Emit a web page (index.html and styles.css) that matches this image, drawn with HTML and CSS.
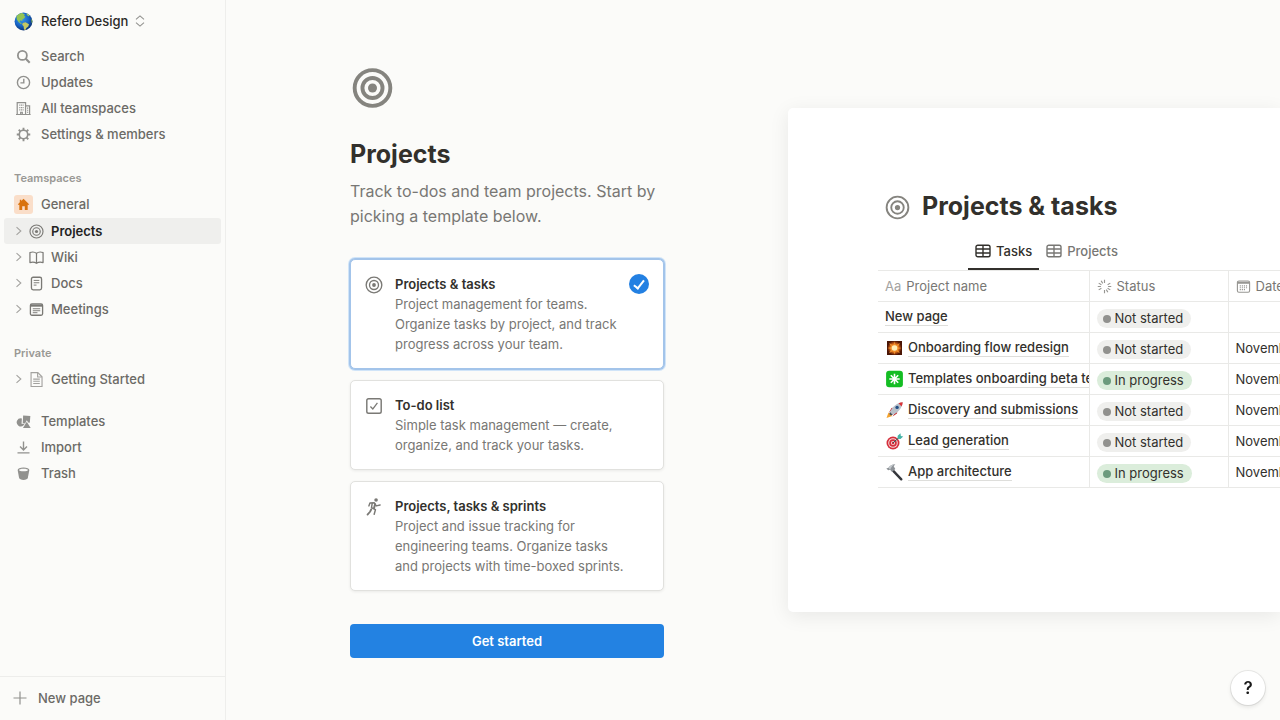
FILE: index.html
```html
<!DOCTYPE html>
<html lang="en">
<head>
  <meta charset="UTF-8" />
  <meta name="viewport" content="width=device-width, initial-scale=1" />
  <title>Projects</title>
  <link rel="stylesheet" href="styles.css">
</head>
<body>
  <!-- Shared icons -->
  <svg class="sprite" aria-hidden="true">
    <symbol id="i-target" viewBox="0 0 20 20">
      <g fill="none" stroke="currentColor" stroke-width="1.5">
        <circle cx="10" cy="10" r="8.7" />
        <circle cx="10" cy="10" r="5" />
      </g>
      <circle cx="10" cy="10" r="2.1" fill="currentColor" />
    </symbol>
    <symbol id="i-target-bold" viewBox="0 0 20 20">
      <g fill="none" stroke="currentColor" stroke-width="1.9">
        <circle cx="10" cy="10" r="8.7" />
        <circle cx="10" cy="10" r="4.9" />
      </g>
      <circle cx="10" cy="10" r="2.2" fill="currentColor" />
    </symbol>
    <symbol id="i-chevron" viewBox="0 0 10 10">
      <path d="M2.8.6 7.600 5 2.800 9.400" fill="none" stroke="currentColor" stroke-width="1.2" />
    </symbol>
    <symbol id="i-table" viewBox="0 0 16 14">
      <g fill="none" stroke="currentColor" stroke-width="1.4">
        <rect x="1" y="1.2" width="14" height="11.6" rx="1.8" />
        <path d="M1 5h14M1 9h14M8 1.2v11.6" />
      </g>
    </symbol>
  </svg>

  <aside class="sidebar">
    <button class="switcher" type="button">
      <svg class="globe" viewBox="0 0 20 20">
        <defs>
          <radialGradient id="sea" cx="40%" cy="35%" r="65%">
            <stop offset="0" stop-color="#3f9bea" />
            <stop offset="0.6" stop-color="#1766c8" />
            <stop offset="1" stop-color="#0c3478" />
          </radialGradient>
          <clipPath id="globe-clip"><circle cx="10" cy="10" r="9.4" /></clipPath>
        </defs>
        <circle cx="10" cy="10" r="9.4" fill="url(#sea)" />
        <g clip-path="url(#globe-clip)">
          <path d="M2.5 4.5C4 2.200 6.500 1 9 1.200l2.500 1.300-1 1.500 1.500 1-1.500 1.800-1.500.7-.5 2-1.500-.8-1.200 1 .8 1.300 1.700 1.200-1 .3-2.500-2L3 8z" fill="#93c455" />
          <path d="M9.200 11.500l3-.7 3.600 2-.8 2.500-2 1.500-1 2.200-1.500-.6-.4-3.300-1.500-1.800z" fill="#c5c763" />
          <path d="M13 1.300l2.500 1 1 2-1.500.2-1.500-1.500z" fill="#9fca65" />
          <path d="M18 7.500l2 1v4l-1.500-1.500z" fill="#77a84c" />
        </g>
      </svg>
      <span>Refero Design</span>
      <svg class="updown" viewBox="0 0 10 12">
        <path d="M1 4.300 5 .9l4 3.400M1 7.700l4 3.400 4-3.400" fill="none" stroke="currentColor" stroke-width="1.1" />
      </svg>
    </button>

    <nav class="menu">
      <a class="item" href="#">
        <svg class="icon" viewBox="0 0 16 16"><g fill="none" stroke="currentColor" stroke-width="1.900"><circle cx="6.800" cy="6.800" r="4.800" /><path d="M10.200 10.200 14.600 14.600" stroke-width="2.200" /></g></svg>
        <span>Search</span>
      </a>
      <a class="item" href="#">
        <svg class="icon" viewBox="0 0 16 16"><g fill="none" stroke="currentColor" stroke-width="1.500"><circle cx="8" cy="8" r="6.500" /><path d="M8.300 4v4.400H4.700" /></g></svg>
        <span>Updates</span>
      </a>
      <a class="item" href="#">
        <svg class="icon" viewBox="0 0 16 16"><g fill="none" stroke="currentColor" stroke-width="1.300"><path d="M1.300 14.500V1.800h8.900v12.700M0 14.400h15.600M10.200 5.200h4.300v9.200M5 14v-2h1.700v2" /><path d="M3.500 4.500h4.600M3.500 7h4.600M3.500 9.500h4.600" stroke-dasharray="1.100 .65" /><path d="M12.400 7v6" stroke-dasharray="1.200 1" /></g></svg>
        <span>All teamspaces</span>
      </a>
      <a class="item" href="#">
        <svg class="icon" viewBox="0 0 16 16"><circle cx="8" cy="8" r="4.500" fill="none" stroke="currentColor" stroke-width="1.700" /><path d="M8 .8v2.800M8 12.400v2.800M.8 8h2.800M12.400 8h2.800M2.900 2.900l2 2M11.100 11.100l2 2M13.100 2.900l-2 2M4.900 11.100l-2 2" stroke="currentColor" stroke-width="2" /></svg>
        <span>Settings &amp; members</span>
      </a>
    </nav>

    <section class="group">
      <h2 class="group-title">Teamspaces</h2>
      <a class="item team" href="#">
        <span class="team-icon">
          <svg viewBox="0 0 14 14"><path d="M7 .8 13 6.600v.8h-1.500V13H8.400V9H5.600v4H2.500V7.400H1v-.8l2-2V2h1.600v1.200z" fill="#d9730d" /></svg>
        </span>
        <span>General</span>
      </a>
      <a class="item page active" href="#">
        <svg class="chevron"><use href="#i-chevron" /></svg>
        <svg class="icon"><use href="#i-target" /></svg>
        <span>Projects</span>
      </a>
      <a class="item page" href="#">
        <svg class="chevron"><use href="#i-chevron" /></svg>
        <svg class="icon" viewBox="0 0 16 16"><path d="M8 3.600C6.200 2 3.600 1.800 1 2.700v10.700c2.600-.8 5.200-.6 7 .9 1.800-1.500 4.400-1.700 7-.9V2.700C12.400 1.800 9.800 2 8 3.600zv10.500" fill="none" stroke="currentColor" stroke-width="1.300" stroke-linejoin="round" /></svg>
        <span>Wiki</span>
      </a>
      <a class="item page" href="#">
        <svg class="chevron"><use href="#i-chevron" /></svg>
        <svg class="icon" viewBox="0 0 16 16"><g fill="none" stroke="currentColor"><rect x="2.600" y="1.300" width="10.800" height="13.400" rx="1.800" stroke-width="1.400" /><path d="M5 4.700h6M5 7.200h6M5 9.700h3" /></g></svg>
        <span>Docs</span>
      </a>
      <a class="item page" href="#">
        <svg class="chevron"><use href="#i-chevron" /></svg>
        <svg class="icon" viewBox="0 0 16 16"><g fill="none" stroke="currentColor"><rect x="1.500" y="2.100" width="13" height="12" rx="1.600" stroke-width="1.400" /><path d="M1.500 4h13" stroke-width="2" /><path d="M4 7.200h8M4 9.300h8M4 11.400h5" /></g></svg>
        <span>Meetings</span>
      </a>
    </section>

    <section class="group">
      <h2 class="group-title">Private</h2>
      <a class="item page" href="#">
        <svg class="chevron"><use href="#i-chevron" /></svg>
        <svg class="icon light" viewBox="0 0 16 16"><g fill="none" stroke="currentColor" stroke-width="1.200"><path d="M2.200.6h7.200l4.500 4.500v10.300H2.200z" /><path d="M9.200.8v4.500h4.500M4.500 7.600h7M4.500 9.900h7M4.500 12.200h7" /></g></svg>
        <span>Getting Started</span>
      </a>
    </section>

    <nav class="menu tools">
      <a class="item" href="#">
        <svg class="icon" viewBox="0 0 16 16"><g fill="currentColor"><path d="M7.600 1.700l7.700.5-.6 7-1.700-.1-1.500-2.400L9.700 10l-2.500-.2z" /><path d="M6.300 4.800A4.300 4.300 0 1 0 8.100 12l1-1.400-3.200-.3z" /><path d="M11.500 8.300l4.200 6.500H7.400z" /></g></svg>
        <span>Templates</span>
      </a>
      <a class="item" href="#">
        <svg class="icon" viewBox="0 0 16 16"><path d="M8 1.500v9M4.300 7 8 10.600 11.700 7M1.600 13.700h12.800" fill="none" stroke="currentColor" stroke-width="1.500" /></svg>
        <span>Import</span>
      </a>
      <a class="item" href="#">
        <svg class="icon" viewBox="0 0 16 16"><path fill-rule="evenodd" fill="currentColor" d="M8 1.500c3.700 0 6.200 1 6.200 2.800 0 .6-1.200 6.500-1.500 8.200-.3 1.500-2.200 2.300-4.700 2.300s-4.400-.8-4.700-2.300c-.3-1.700-1.500-7.600-1.500-8.200C1.800 2.500 4.300 1.500 8 1.500zm0 1.300c-2.800 0-4.800.6-4.800 1.400S5.200 5.700 8 5.700s4.800-.7 4.800-1.500S10.800 2.800 8 2.800z" /></svg>
        <span>Trash</span>
      </a>
    </nav>

    <button class="new-page" type="button">
      <svg viewBox="0 0 14 14"><path d="M7 .5v13M.5 7h13" stroke="currentColor" stroke-width="1.200" /></svg>
      <span>New page</span>
    </button>
  </aside>

  <main class="main">
    <form class="picker">
      <svg class="hero-icon"><use href="#i-target-bold" /></svg>
      <h1>Projects</h1>
      <p class="intro">Track to-dos and team projects. Start by picking a template below.</p>

      <div class="cards">
        <label class="card">
          <svg class="card-icon"><use href="#i-target" /></svg>
          <span class="card-text">
            <strong>Projects &amp; tasks</strong>
            <span>Project management for teams. Organize tasks by project, and track progress across your team.</span>
          </span>
          <input type="radio" name="template" checked />
        </label>
        <label class="card">
          <svg class="card-icon" viewBox="0 0 20 20"><g fill="none" stroke="currentColor"><rect x="2" y="2" width="16" height="16" rx="2" stroke-width="1.600" /><path d="M6 10.500 8.700 13.300 13.800 6.500" stroke-width="1.400" /></g></svg>
          <span class="card-text">
            <strong>To-do list</strong>
            <span>Simple task management — create, organize, and track your tasks.</span>
          </span>
          <input type="radio" name="template" />
        </label>
        <label class="card">
          <svg class="card-icon" viewBox="0 0 20 20"><circle cx="12.300" cy="2.300" r="2" fill="currentColor" /><g fill="none" stroke="currentColor" stroke-width="1.600" stroke-linecap="round" stroke-linejoin="round"><path d="M4.300 8.800 5.500 5.500 10.200 5.300 12.500 8.800 16.800 7.800" /><path d="M8 6 7.200 10.800 11.600 13 10.200 18" /><path d="M11.200 6.800 10 11.500" stroke-width="2.200" /><path d="M7 12.500 5.600 15.300 2.800 18.500" stroke-width="2" /></g></svg>
          <span class="card-text">
            <strong>Projects, tasks &amp; sprints</strong>
            <span>Project and issue tracking for engineering teams. Organize tasks and projects with time-boxed sprints.</span>
          </span>
          <input type="radio" name="template" />
        </label>
      </div>

      <button class="primary" type="button">Get started</button>
    </form>

    <section class="preview">
      <header class="preview-title">
        <svg><use href="#i-target" /></svg>
        <h2>Projects &amp; tasks</h2>
      </header>
      <div class="tabs">
        <button class="tab current" type="button"><svg><use href="#i-table" /></svg>Tasks</button>
        <button class="tab" type="button"><svg><use href="#i-table" /></svg>Projects</button>
      </div>
      <table>
        <colgroup>
          <col class="col-name" />
          <col class="col-status" />
          <col class="col-date" />
        </colgroup>
        <thead>
          <tr>
            <th><span class="th"><span class="aa">Aa</span>Project name</span></th>
            <th><span class="th"><svg viewBox="0 0 16 16"><path d="M8 .8v3.400M8 11.800v3.400M.8 8h3.400M11.800 8h3.400M4.400 1.800l1.700 2.900M9.900 11.300l1.700 2.900M14.200 4.400l-2.900 1.700M4.700 9.900l-2.900 1.700M1.800 4.400l2.900 1.700M11.300 9.900l2.900 1.700" stroke="currentColor" stroke-width="1.200" /></svg>Status</span></th>
            <th><span class="th"><svg viewBox="0 0 16 16"><g fill="none" stroke="currentColor"><rect x="1.500" y="2.100" width="13" height="12" rx="1.600" stroke-width="1.200" /><path d="M1.500 4h13" stroke-width="2.200" /><path d="M4 7.300h8M4 9.300h8M4 11.300h6" stroke-width="1.200" stroke-dasharray="1.200 1" /></g></svg>Date</span></th>
          </tr>
        </thead>
        <tbody>
          <tr>
            <td><span class="name"><a href="#">New page</a></span></td>
            <td><span class="status">Not started</span></td>
            <td></td>
          </tr>
          <tr>
            <td><span class="name">
              <svg viewBox="0 0 18 18">
                <defs><radialGradient id="spark"><stop offset="0" stop-color="#fffbe0" /><stop offset="0.250" stop-color="#ffd873" /><stop offset="0.550" stop-color="#e8751c" /><stop offset="1" stop-color="#561705" /></radialGradient></defs>
                <rect x="1.500" y="2" width="15" height="14" fill="#4a1606" />
                <circle cx="9" cy="9" r="7" fill="url(#spark)" />
                <path d="M9 2.500l1.100 4 4.400-2.500-2.500 4.200 4 .9-4 1.200 2.400 4-4.200-2.500L9 15.500l-1.300-3.800-4.200 2.600L6 10.200l-4-1.100 4-1L3.600 4l4.300 2.500z" fill="#f0912c" />
                <circle cx="9" cy="9" r="2.800" fill="#ffefb8" />
              </svg>
              <a href="#">Onboarding flow redesign</a></span></td>
            <td><span class="status">Not started</span></td>
            <td>November</td>
          </tr>
          <tr>
            <td><span class="name">
              <svg viewBox="0 0 18 18">
                <rect x=".6" y=".8" width="16.800" height="16.500" rx="3" fill="#14bd23" />
                <path d="M9 3.800v10.400M3.800 9h10.400M5.300 5.300l7.400 7.400M12.700 5.300l-7.400 7.400" stroke="#fff" stroke-width="1.600" />
              </svg>
              <a href="#">Templates onboarding beta test</a></span></td>
            <td><span class="status progress">In progress</span></td>
            <td>November</td>
          </tr>
          <tr>
            <td><span class="name">
              <svg viewBox="0 0 18 18">
                <path d="M3.500 11.500 6 7l4-.5zM7 15.500l4.500-3 .5-4z" fill="#c52b30" />
                <path d="M1 17l2-5.500L6.800 15z" fill="#f5a22c" />
                <path d="M4.500 11C7 5.500 11 2 17.200 1.200 16.500 7 13 11.500 7.300 13.700z" fill="#b9c1ca" />
                <path d="M13 2.300c1.300-.6 2.700-1 4.200-1.100-.1 1.500-.5 3-1.100 4.300z" fill="#da3237" />
                <path d="M4.500 11l2.800 2.700-2 .8-1.500-1.500z" fill="#454b55" />
                <circle cx="11.600" cy="6.400" r="1.700" fill="#234f85" />
              </svg>
              <a href="#">Discovery and submissions</a></span></td>
            <td><span class="status">Not started</span></td>
            <td>November</td>
          </tr>
          <tr>
            <td><span class="name">
              <svg viewBox="0 0 18 18">
                <circle cx="7.500" cy="11" r="6.500" fill="#d52f3c" />
                <circle cx="7.500" cy="11" r="4.800" fill="#f6dcdc" />
                <circle cx="7.500" cy="11" r="3.800" fill="#d52f3c" />
                <circle cx="7.500" cy="11" r="2.100" fill="#f6dcdc" />
                <circle cx="7.500" cy="11" r="1.200" fill="#d52f3c" />
                <path d="M7.500 11l6-5.500" stroke="#27595d" stroke-width="1" />
                <path d="M12 6.800l.2-3L15 1.300l.3 2.600 2.400.6L15 7z" fill="#44b3a6" />
              </svg>
              <a href="#">Lead generation</a></span></td>
            <td><span class="status">Not started</span></td>
            <td>November</td>
          </tr>
          <tr>
            <td><span class="name">
              <svg viewBox="0 0 18 18">
                <path d="M6.800 6.800 15.800 16.300" stroke="#35373c" stroke-width="2.400" stroke-linecap="round" />
                <path d="M.8 5.600 3 4.800C4.500 2.500 6.500 1.300 9.800 1.200L8.200 3.300l1.600 2.600-3.200 3-2-2.200-1.900.6z" fill="#8d9297" />
                <path d="M3 4.800C4.500 2.500 6.500 1.300 9.800 1.200 7.500 2 6 3.500 4.600 6.700z" fill="#c3c8cc" />
              </svg>
              <a href="#">App architecture</a></span></td>
            <td><span class="status progress">In progress</span></td>
            <td>November</td>
          </tr>
        </tbody>
      </table>
    </section>
  </main>

  <button class="help" type="button">?</button>
</body>
</html>
```
FILE: styles.css
```css
* {
  box-sizing: border-box;
}

body {
  margin: 0;
  display: flex;
  min-height: 100vh;
  overflow: hidden;
  font-family: Inter, "Liberation Sans", sans-serif;
  font-size: 13px;
  line-height: 20px;
  color: #32302c;
  background: #fbfbf9;
}

h1, h2, p {
  margin: 0;
}

a {
  color: inherit;
  text-decoration: none;
}

button {
  font: inherit;
  color: inherit;
  background: none;
  border: none;
  padding: 0;
  cursor: pointer;
}

svg {
  display: block;
  flex-shrink: 0;
}

.sprite {
  position: absolute;
  width: 0;
  height: 0;
}

/* Sidebar */
.sidebar {
  display: flex;
  flex-direction: column;
  width: 226px;
  flex-shrink: 0;
  border-right: 1px solid #eeeeec;
  font-weight: 500;
  color: #6b6a66;
}

.switcher {
  display: flex;
  align-items: center;
  height: 42px;
  margin-bottom: 1px;
  padding: 0 14px;
  color: #2b2a27;
}

.globe {
  width: 19px;
  height: 19px;
  margin-right: 8px;
}

.updown {
  width: 10px;
  height: 12px;
  margin-left: 7px;
  color: #91918e;
}

.item {
  display: flex;
  align-items: center;
  height: 26px;
  margin: 0 4px;
  padding: 0 12px;
  border-radius: 3px;
}

.item:hover {
  background: #f0f0ee;
}

.icon {
  width: 15px;
  height: 15px;
  margin-right: 10px;
  color: #91918e;
}

.page {
  padding-left: 10px;
}

.page .icon {
  margin: 0 7px 0 6px;
  color: #7a7975;
}

.page .light {
  color: #a3a29f;
}

.chevron {
  width: 9px;
  height: 10px;
  color: #a3a29f;
}

.active {
  background: #efefed;
  color: #23221f;
  font-weight: 600;
}

.group {
  margin-top: 19px;
}

.group-title {
  padding: 0 14px;
  font-size: 11px;
  font-weight: 600;
  line-height: 25px;
  color: #999894;
}

.team {
  margin-bottom: 1px;
  padding-left: 10px;
}

.team-icon {
  display: flex;
  align-items: center;
  justify-content: center;
  width: 19px;
  height: 19px;
  margin-right: 8px;
  border-radius: 3px;
  background: #fadec9;
}

.team-icon svg {
  width: 13px;
  height: 13px;
}

.tools {
  margin-top: 16px;
}

.new-page {
  display: flex;
  align-items: center;
  gap: 11px;
  height: 44px;
  margin-top: auto;
  padding: 0 13px 2px;
  border-top: 1px solid #ededeb;
}

.new-page svg {
  width: 14px;
  height: 14px;
  color: #91918e;
}

/* Template picker */
.main {
  display: flex;
  align-items: center;
  gap: 124px;
  flex: 1;
  min-width: 0;
  padding-left: 124px;
}

.picker {
  width: 314px;
  flex-shrink: 0;
}

.hero-icon {
  width: 41px;
  height: 52px;
  margin: 0 2px 24px;
  color: #85847f;
}

h1 {
  font-size: 25px;
  line-height: 32px;
}

.intro {
  margin: 9px 0 30px;
  font-size: 16px;
  line-height: 25px;
  color: #787774;
}

.cards {
  display: grid;
  gap: 11px;
}

.card {
  display: flex;
  align-items: flex-start;
  padding: 14px;
  border: 1px solid #e1e1de;
  border-radius: 5px;
  background: #fff;
  box-shadow: 0 1px 3px rgba(15, 15, 15, 0.07);
  cursor: pointer;
}

.card:has(input:checked) {
  border-color: #a3c4ea;
  box-shadow: 0 0 0 1px #a3c4ea, 0 0 0 2px #d0e4f8;
}

.card-icon {
  width: 18px;
  height: 18px;
  margin: 2px 12px 0 0;
  color: #7a7975;
}

.card-text {
  flex: 1;
  color: #787774;
}

.card strong {
  display: block;
  font-weight: 600;
  color: #32302c;
}

.card input {
  appearance: none;
  display: flex;
  align-items: center;
  justify-content: center;
  width: 20px;
  height: 20px;
  margin: 0 0 0 5px;
  border-radius: 50%;
}

.card input:checked {
  background: #2380e2;
}

.card input:checked::after {
  content: "";
  box-sizing: border-box;
  width: 6px;
  height: 11px;
  margin-bottom: 2px;
  border: solid #fff;
  border-width: 0 2px 2px 0;
  transform: rotate(38deg);
}

.primary {
  display: block;
  width: 100%;
  height: 34px;
  margin-top: 33px;
  border-radius: 4px;
  background: #2382e2;
  color: #fff;
  font-weight: 600;
}

/* Preview */
.preview {
  flex: 1;
  min-width: 0;
  overflow: hidden;
  padding: 82px 0 124px 90px;
  border-radius: 5px 0 0 5px;
  background: #fff;
  box-shadow: 0 4px 20px rgba(15, 15, 15, 0.08);
}

.preview-title {
  display: flex;
  align-items: center;
  gap: 12px;
  padding-left: 7px;
}

.preview-title svg {
  width: 25px;
  height: 25px;
  margin-top: 3px;
  color: #85847f;
}

.preview-title h2 {
  font-size: 25px;
  line-height: 32px;
  white-space: nowrap;
}

.tabs {
  display: flex;
  margin-top: 12px;
  padding-left: 90px;
}

.tab {
  display: flex;
  align-items: center;
  gap: 5px;
  height: 36px;
  padding: 0 7px;
  border-bottom: 2px solid transparent;
  font-weight: 500;
  color: #787774;
}

.tab svg {
  width: 16px;
  height: 14px;
}

.current {
  border-color: #32302c;
  color: #32302c;
}

table {
  width: 550px;
  table-layout: fixed;
  border-collapse: collapse;
}

.col-name {
  width: 211px;
}

.col-status {
  width: 139px;
}

th, td {
  height: 31px;
  padding: 0 7px;
  border: 1px solid #e9e9e7;
  border-width: 1px 0 1px 1px;
  text-align: left;
  font-weight: 400;
}

th:first-child, td:first-child {
  border-left: none;
}

td:first-child {
  padding-right: 0;
}

td:nth-child(2) {
  padding-top: 2px;
}

.th {
  display: flex;
  align-items: center;
  gap: 5px;
  color: #787774;
}

.th svg {
  width: 15px;
  height: 15px;
  color: #979692;
}

.aa {
  color: #a3a29f;
}

.name {
  display: flex;
  align-items: center;
  gap: 4px;
  overflow: hidden;
  white-space: nowrap;
  font-weight: 500;
}

.name svg {
  width: 19px;
  height: 18px;
}

.name a {
  line-height: 17px;
  border-bottom: 1px solid #dededb;
}

.status {
  display: inline-flex;
  align-items: center;
  gap: 4px;
  padding: 0 8px 0 6px;
  border-radius: 10px;
  line-height: 19px;
  background: #efefed;
  vertical-align: middle;
}

.status::before {
  content: "";
  width: 8px;
  height: 8px;
  border-radius: 50%;
  background: #91918e;
}

.progress {
  background: #dbeddb;
}

.progress::before {
  background: #6c9b7d;
}

/* Help button */
.help {
  position: fixed;
  right: 15px;
  bottom: 15px;
  width: 34px;
  height: 34px;
  border-radius: 50%;
  background: #fff;
  box-shadow: 0 0 0 1px rgba(15, 15, 15, 0.08), 0 2px 4px rgba(15, 15, 15, 0.1);
  font-size: 17px;
  font-weight: 600;
  color: #1a1a1a;
}
```
